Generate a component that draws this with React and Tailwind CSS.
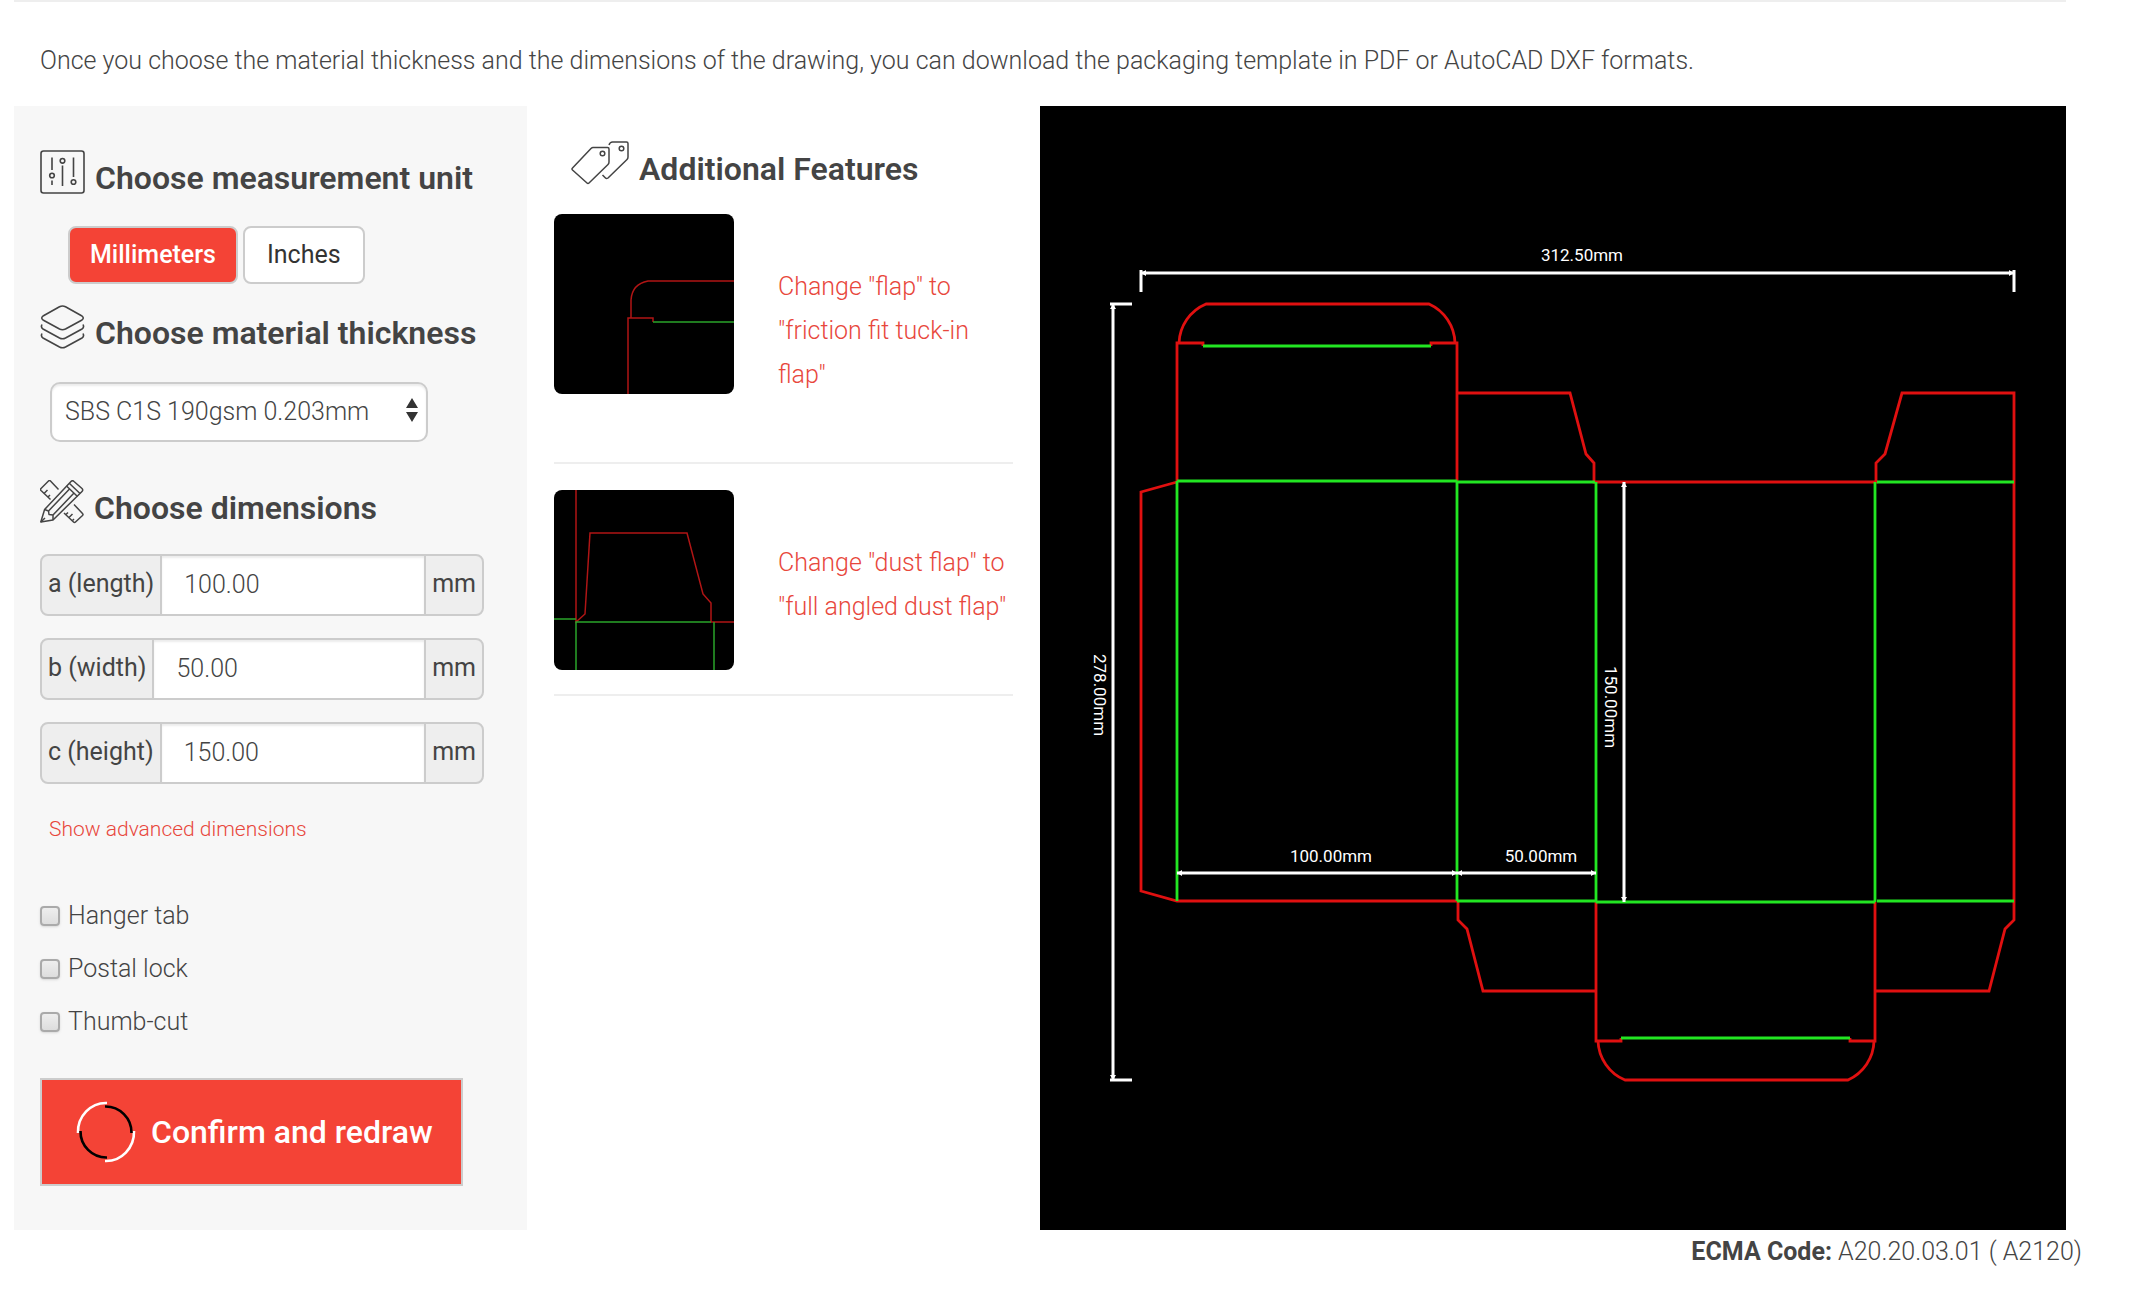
import { useState } from 'react';

const FEATURES = [
    {
        text: 'Change "flap" to "friction fit tuck-in flap"',
        rowClass: 'pb-[65px]',
        red: ['M180 67H94Q78 70 77 86V104', 'M99 108V104H74V180'],
        green: ['M99 108H180'],
    },
    {
        text: 'Change "dust flap" to "full angled dust flap"',
        rowClass: 'pt-[26px] pb-6',
        red: ['M22 0V132L31 124L36 43H133L149 104L157 113V132H180'],
        green: ['M0 129H22', 'M22 180V132H157', 'M160 132V180'],
    },
];

const EXTRAS = ['Hanger tab', 'Postal lock', 'Thumb-cut'];

function SlidersIcon() {
    return (
        <svg width="45" height="44" viewBox="0 0 45 44" fill="none" stroke="#444" strokeWidth="1.6">
            <rect x="1" y="1" width="43" height="42" rx="2.5" />
            <path d="M12 7.500V20M12 30.500V35M22.500 15.500V36M33.500 7.500V27" />
            <circle cx="12" cy="25.500" r="2.300" />
            <circle cx="22.500" cy="10.800" r="2.300" />
            <circle cx="33.500" cy="32" r="2.300" />
        </svg>
    );
}

function LayersIcon() {
    return (
        <svg width="45" height="44" viewBox="0 0 45 44" fill="none" stroke="#444" strokeWidth="1.6" strokeLinejoin="round">
            <path d="M19.500 1.800Q22.500 .200 25.500 1.800L42 11Q44.500 13 42 15L25.500 24Q22.500 25.400 19.500 24L3 15Q.500 13 3 11Z" />
            <path d="M2 19.500Q.500 22.500 3 24L19.500 33Q22.500 34.500 25.500 33L42 24Q44.500 22.500 43 19.500" />
            <path d="M2 28.500Q.500 31.500 3 33L19.500 42Q22.500 43.500 25.500 42L42 33Q44.500 31.500 43 28.500" />
        </svg>
    );
}

function PencilRulerIcon() {
    return (
        <svg width="44" height="44" viewBox="0 0 44 44" fill="none" stroke="#444" strokeWidth="1.5" strokeLinejoin="round">
            <path d="M18.500 9.500L10.500 1Q9.500 0 8.500 1L1 8.500Q0 9.500 1 10.500L10.500 19.500" />
            <path d="M34 24.500L42.500 33.500Q43.500 34.500 42.500 35.500L35.500 42Q34.500 43 33.500 42L24 33" />
            <path d="M4 13.500L7.500 10M8 17L10 15M26 34.500L28 32.500M29 37.500L32.500 34M32.500 40.500L34 39" />
            <path d="M31 1.500Q32.500 0 34 1.500L42 8.500Q43.500 10 42 11.500L13 40L.800 42L4.600 29.500Z" />
            <path d="M26.500 6L37.500 16.500M29.500 3.500L40 13.500M29.500 9L8.500 31M34 13L13 35" />
            <path d="M4.600 29.500L8.500 31L9 34.500L13 35V40M.800 42L5 38" />
        </svg>
    );
}

function TagsIcon() {
    return (
        <svg width="58" height="44" viewBox="0 0 58 44" fill="none" stroke="#444" strokeWidth="1.5" strokeLinejoin="round">
            <path d="M22 6.500H36.500Q38 6.500 38 8V21Q38 22.500 37 23.500L18 42Q17 43 16 42L1.500 29Q.500 28 1.500 27L20 7.500Q21 6.500 22 6.500Z" />
            <circle cx="31.500" cy="12.500" r="2.300" />
            <path d="M38 4Q39 1 41.500 1H55.500Q57 1 57 2.500V16Q57 17.500 56 18.500L37 37Q35.500 38 34.500 37L31.500 34" />
            <circle cx="50.500" cy="7.500" r="2.300" />
        </svg>
    );
}

function Spinner() {
    return (
        <svg width="60" height="62" viewBox="0 0 60 62" fill="none" strokeWidth="2.600">
            <path d="M2 32A28 29 0 0 1 31 2M58 30A28 29 0 0 1 29 60" stroke="#fff" />
            <path d="M29 5.500A26 26 0 0 1 55.500 32M31 56.500A26 26 0 0 1 4.500 30" stroke="#000" />
        </svg>
    );
}

function SectionTitle({ icon, children }) {
    return (
        <h2 className="flex items-end gap-[10px] text-[32px] leading-8 font-semibold">
            {icon}
            {children}
        </h2>
    );
}

function DimensionField({ id, label, value, onChange }) {
    return (
        <div className="flex h-[62px] overflow-hidden rounded-[8px] border-2 border-[#ccc] bg-[#eee]">
            <label htmlFor={id} className="flex items-center border-r-2 border-[#ccc] px-[6px] pb-[2px] font-normal">
                {label}
            </label>
            <input
                id={id}
                value={value}
                onChange={(e) => onChange(e.target.value)}
                className="w-0 min-w-0 flex-1 bg-white px-[22px] font-light shadow-[inset_0_2px_2px_rgba(0,0,0,0.08)]"
            />
            <span className="flex items-center border-l-2 border-[#ccc] px-[6px] pb-[2px] font-normal">mm</span>
        </div>
    );
}

function BoxDrawing() {
    return (
        <svg viewBox="0 0 1026 1124" className="block w-full bg-black" role="img" aria-label="Packaging template">
            <g fill="none" stroke="#e01010" strokeWidth="2.800">
                <path d="M137 376V237H163V240M137 376L101 386V785L137 795H417" />
                <path d="M139 237A44 44 0 0 1 166 198H389A44 44 0 0 1 415 237" />
                <path d="M391 240V237H417V376M417 287H530L546 348L554 357V376H836V357L845 348L862 287H974V814L965 823L949 885H836" />
                <path d="M418 795V814L427 823L443 885H556M556 796V935H581V932M835 796V935H810V932" />
                <path d="M558 935A44 44 0 0 0 585 974H808A44 44 0 0 0 834 935" />
            </g>
            <g fill="none" stroke="#22e622" strokeWidth="2.800">
                <path d="M163 240H391M137 375H417M417 376H555M837 376H974" />
                <path d="M137 375V795M417 375V795M556 376V796M835 376V796" />
                <path d="M417 795H556M556 796H835M837 795H974M581 932H810" />
            </g>
            <g fill="none" stroke="#fff" strokeWidth="3">
                <path d="M101 186V164M974 186V164M101 167H974" />
                <path d="M92 198H70M92 974H70M73 198V974" />
                <path d="M137 767H556M584 376V796" />
            </g>
            <g fill="#fff">
                <path d="M101 167L106 164V170ZM974 167L969 164V170ZM73 198L70 203H76ZM73 974L70 969H76Z" />
                <path d="M137 767L142 764V770ZM417 767L412 764V770ZM417 767L422 764V770ZM556 767L551 764V770Z" />
                <path d="M584 376L581 381H587ZM584 796L581 791H587Z" />
            </g>
            <g fill="#fff" fontSize="17" textAnchor="middle">
                <text x="542" y="155">312.50mm</text>
                <text x="291" y="756">100.00mm</text>
                <text x="501" y="756">50.00mm</text>
                <text transform="translate(54 589) rotate(90)">278.00mm</text>
                <text transform="translate(565 601) rotate(90)">150.00mm</text>
            </g>
        </svg>
    );
}

export default function App() {
    const [unit, setUnit] = useState('Millimeters');
    const [dims, setDims] = useState({ length: '100.00', width: '50.00', height: '150.00' });

    const setDim = (key) => (value) => setDims({ ...dims, [key]: value });

    return (
        <div className="min-h-screen bg-white pr-[84px] pl-[14px] font-[Roboto,sans-serif] text-[25px] text-[#444]">
            <hr className="border-t-2 border-[#eee]" />
            <p className="px-[26px] pt-[37px] pb-[23px] leading-[44px] font-light">
                Once you choose the material thickness and the dimensions of the drawing, you can download the packaging template in PDF or AutoCAD DXF formats.
            </p>

            <main className="grid grid-cols-4">
                {/* Settings */}
                <form className="bg-[#f7f7f7] px-[26px] pt-11" onSubmit={(e) => e.preventDefault()}>
                    <SectionTitle icon={<SlidersIcon />}>Choose measurement unit</SectionTitle>
                    <div className="mt-8 flex gap-[5px] pl-7">
                        {['Millimeters', 'Inches'].map((name) => (
                            <button
                                key={name}
                                type="button"
                                onClick={() => setUnit(name)}
                                className={
                                    unit === name
                                        ? 'h-[58px] rounded-[8px] border-2 border-[#ccc] bg-[#f44336] px-5 font-medium text-white'
                                        : 'h-[58px] rounded-[8px] border-2 border-[#ccc] bg-white px-[22px] font-normal text-[#333]'
                                }
                            >
                                {name}
                            </button>
                        ))}
                    </div>

                    <div className="mt-[21px]">
                        <SectionTitle icon={<LayersIcon />}>Choose material thickness</SectionTitle>
                    </div>
                    <div className="relative mt-[33px] mr-[73px] ml-[10px]">
                        <select
                            aria-label="Material thickness"
                            className="h-[60px] w-full appearance-none rounded-[10px] border-2 border-[#ccc] bg-white px-[13px] font-light shadow-[inset_0_2px_2px_rgba(0,0,0,0.08)]"
                        >
                            <option>SBS C1S 190gsm 0.203mm</option>
                        </select>
                        <svg width="12" height="24" viewBox="0 0 12 24" fill="#333" className="pointer-events-none absolute top-4 right-[10px]">
                            <path d="M6 0L12 10H0ZM6 24L12 14H0Z" />
                        </svg>
                    </div>

                    <div className="mt-[38px]">
                        <SectionTitle icon={<PencilRulerIcon />}>Choose dimensions</SectionTitle>
                    </div>
                    <div className="mt-[30px] mr-[17px] space-y-[22px]">
                        <DimensionField id="length" label="a (length)" value={dims.length} onChange={setDim('length')} />
                        <DimensionField id="width" label="b (width)" value={dims.width} onChange={setDim('width')} />
                        <DimensionField id="height" label="c (height)" value={dims.height} onChange={setDim('height')} />
                    </div>
                    <a href="#advanced" className="mt-[27px] ml-[9px] block text-[21px] leading-9 font-light text-[#e8473c]">
                        Show advanced dimensions
                    </a>

                    <div className="mt-[47px] space-y-[9px]">
                        {EXTRAS.map((name) => (
                            <label key={name} className="flex items-center gap-2 leading-[44px] font-light">
                                <input
                                    type="checkbox"
                                    className="size-5 appearance-none rounded-[4px] border-2 border-[#aaa] bg-linear-to-b from-[#eee] to-[#ddd] shadow-sm checked:bg-[#f44336]"
                                />
                                {name}
                            </label>
                        ))}
                    </div>

                    <button
                        type="submit"
                        className="mt-[34px] mb-8 flex h-[108px] items-center gap-[15px] border-2 border-[#ccc] bg-[#f44336] pr-7 pl-[34px] text-[32px] font-medium text-white"
                    >
                        <Spinner />
                        Confirm and redraw
                    </button>
                </form>

                {/* Alternative flaps */}
                <section className="px-[27px] pt-[35px]">
                    <div className="pl-[17px]">
                        <SectionTitle icon={<TagsIcon />}>Additional Features</SectionTitle>
                    </div>
                    <ul className="mt-[29px]">
                        {FEATURES.map((feature) => (
                            <li key={feature.text} className={`border-b-2 border-[#eee] ${feature.rowClass}`}>
                                <a href="#feature" className="flex items-start gap-11 text-[#e8473c]">
                                    <svg viewBox="0 0 180 180" fill="none" strokeWidth="1.500" className="w-[180px] shrink-0 rounded-[8px] bg-black">
                                        {feature.red.map((d) => (
                                            <path key={d} d={d} stroke="#b01515" />
                                        ))}
                                        {feature.green.map((d) => (
                                            <path key={d} d={d} stroke="#2aa52a" />
                                        ))}
                                    </svg>
                                    <span className="pt-[51px] leading-[44px] font-light">{feature.text}</span>
                                </a>
                            </li>
                        ))}
                    </ul>
                </section>

                {/* Drawing */}
                <div className="col-span-2">
                    <BoxDrawing />
                </div>
            </main>

            <p className="-mr-4 text-right leading-[44px] font-light">
                <strong className="font-bold">ECMA Code:</strong> A20.20.03.01 ( A2120)
            </p>
        </div>
    );
}
